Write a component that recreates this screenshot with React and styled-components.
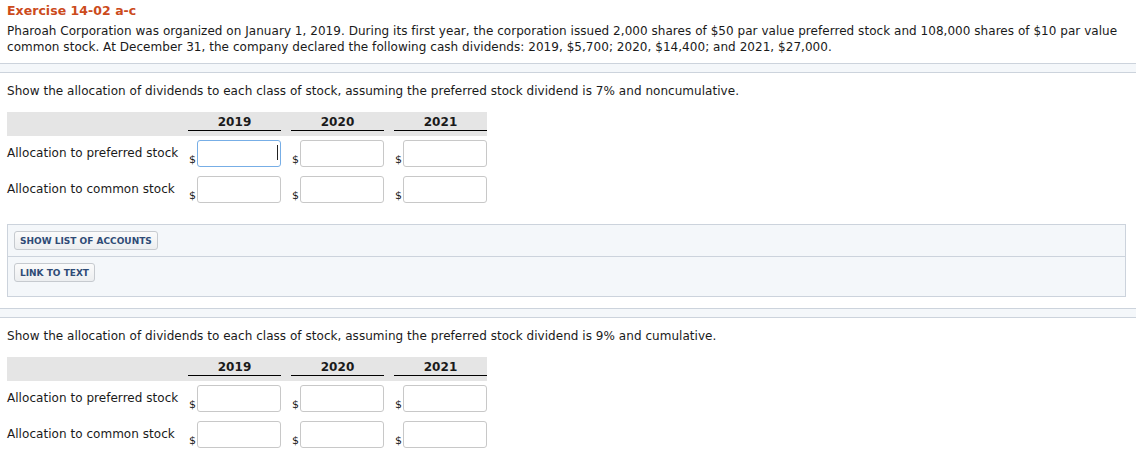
import React from 'react';
import styled, { createGlobalStyle } from 'styled-components';

const GlobalStyle = createGlobalStyle`
  html, body {
    margin: 0;
    padding: 0;
    background: #ffffff;
  }
  body {
    font-family: "DejaVu Sans", Verdana, sans-serif;
    font-size: 12px;
    letter-spacing: 0.04px;
    color: #1a1a1a;
  }
`;

const Page = styled.div`
  width: 1136px;
  padding-top: 3px;
`;

const Inner = styled.div`
  padding: 0 0 0 7px;
`;

const Title = styled.h1`
  margin: 0;
  font-size: 12.5px;
  line-height: 15px;
  font-weight: bold;
  color: #cc4b1c;
`;

const Problem = styled.p`
  margin: 5px 0 0;
  line-height: 16px;
  padding-right: 12px;
`;

const Band = styled.div`
  height: 8px;
  margin-top: ${(p) => p.$top || 0}px;
  background: #f4f7fa;
  border-top: 1px solid #ccd3dc;
  border-bottom: 1px solid #ccd3dc;
`;

const Question = styled.p`
  margin: 10px 0 0 7px;
  line-height: 16px;
`;

const Table = styled.div`
  margin: 13px 0 0 7px;
  width: 480px;
`;

const Grid = styled.div`
  display: grid;
  grid-template-columns: 171px 93px 93px 93px;
  column-gap: 10px;
`;

const HeaderRow = styled(Grid)`
  height: 24px;
  background: #e5e5e5;
`;

const YearCell = styled.div`
  align-self: start;
  margin-top: 2px;
  height: 16px;
  text-align: center;
  font-weight: bold;
  line-height: 16px;
  border-bottom: 1px solid #000;
`;

const Row = styled(Grid)`
  height: 27px;
  margin-top: ${(p) => p.$top}px;
  align-items: center;
`;

const Label = styled.div`
  white-space: nowrap;
  line-height: 16px;
  margin-top: -2px;
`;

const Cell = styled.div`
  display: flex;
  align-items: flex-end;
  height: 27px;
`;

const Dollar = styled.span`
  width: 9px;
  padding-left: 1px;
  box-sizing: border-box;
  font-size: 11px;
  line-height: 13px;
  margin-bottom: 1px;
`;

const InputWrap = styled.span`
  position: relative;
  display: block;
  width: 84px;
  height: 27px;
`;

const Input = styled.input`
  box-sizing: border-box;
  width: 100%;
  height: 100%;
  margin: 0;
  padding: 0 4px;
  font: inherit;
  text-align: right;
  background: #fff;
  border: 1px solid ${(p) => (p.$focused ? '#77aee6' : '#c8c8c8')};
  border-radius: 3px;
  outline: none;
`;

const Caret = styled.span`
  position: absolute;
  right: 3px;
  top: 5px;
  width: 1px;
  height: 15px;
  background: #222;
`;

const Panel = styled.div`
  margin: 21px 10px 0 7px;
  background: #f4f7fa;
  border: 1px solid #ccd3dc;
`;

const PanelSection = styled.div`
  padding: 6px 6px ${(p) => p.$bottom}px;
  border-top: ${(p) => (p.$divider ? '1px solid #ccd3dc' : 'none')};
`;

const ToolButton = styled.button`
  display: inline-block;
  height: 19px;
  margin: 0;
  padding: 0 5px;
  font-family: "DejaVu Sans", Verdana, sans-serif;
  font-size: 9px;
  font-weight: bold;
  color: #2f4b76;
  background: linear-gradient(#fbfbfb, #eceef0);
  border: 1px solid #c6cacf;
  border-radius: 3px;
  cursor: pointer;
`;

const years = ['2019', '2020', '2021'];

function AllocationTable({ focusFirst }) {
  const rows = ['Allocation to preferred stock', 'Allocation to common stock'];
  return (
    <Table>
      <HeaderRow>
        <div />
        {years.map((y) => (
          <YearCell key={y}>{y}</YearCell>
        ))}
      </HeaderRow>
      {rows.map((label, r) => (
        <Row key={label} $top={r === 0 ? 4 : 9}>
          <Label>{label}</Label>
          {years.map((y, c) => {
            const focused = focusFirst && r === 0 && c === 0;
            return (
              <Cell key={y}>
                <Dollar>$</Dollar>
                <InputWrap>
                  <Input type="text" $focused={focused} />
                  {focused && <Caret />}
                </InputWrap>
              </Cell>
            );
          })}
        </Row>
      ))}
    </Table>
  );
}

export default function App() {
  return (
    <Page>
      <GlobalStyle />
      <Inner>
        <Title>Exercise 14-02 a-c</Title>
        <Problem>
          Pharoah Corporation was organized on January 1, 2019. During its first year, the corporation issued 2,000 shares of $50 par value preferred stock and 108,000 shares of $10 par value common stock. At December 31, the company declared the following cash dividends: 2019, $5,700; 2020, $14,400; and 2021, $27,000.
        </Problem>
      </Inner>
      <Band $top={8} />
      <Question>
        Show the allocation of dividends to each class of stock, assuming the preferred stock dividend is 7% and noncumulative.
      </Question>
      <AllocationTable focusFirst />
      <Panel>
        <PanelSection $bottom={6}>
          <ToolButton>SHOW LIST OF ACCOUNTS</ToolButton>
        </PanelSection>
        <PanelSection $divider $bottom={14}>
          <ToolButton>LINK TO TEXT</ToolButton>
        </PanelSection>
      </Panel>
      <Band $top={11} />
      <Question>
        Show the allocation of dividends to each class of stock, assuming the preferred stock dividend is 9% and cumulative.
      </Question>
      <AllocationTable />
    </Page>
  );
}
